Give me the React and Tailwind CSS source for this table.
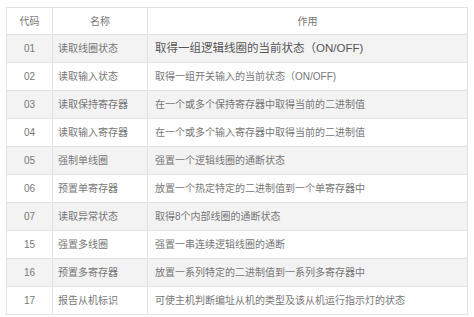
const rows = [
  ["01", "读取线圈状态", "取得一组逻辑线圈的当前状态（ON/OFF)", true],
  ["02", "读取输入状态", "取得一组开关输入的当前状态（ON/OFF)"],
  ["03", "读取保持寄存器", "在一个或多个保持寄存器中取得当前的二进制值"],
  ["04", "读取输入寄存器", "在一个或多个输入寄存器中取得当前的二进制值"],
  ["05", "强制单线圈", "强置一个逻辑线圈的通断状态"],
  ["06", "预置单寄存器", "放置一个热定特定的二进制值到一个单寄存器中"],
  ["07", "读取异常状态", "取得8个内部线圈的通断状态"],
  ["15", "强置多线圈", "强置一串连续逻辑线圈的通断"],
  ["16", "预置多寄存器", "放置一系列特定的二进制值到一系列多寄存器中"],
  ["17", "报告从机标识", "可使主机判断编址从机的类型及该从机运行指示灯的状态"],
]

export default function App() {
  return (
    <div className="w-[474px] h-[317px] bg-white pt-[7px] pl-[6px] font-['Liberation_Sans','Noto_Sans_CJK_SC',sans-serif] text-[#777]">
      <table className="w-[461px] table-fixed border-collapse text-[10px]">
        <colgroup>
          <col className="w-[46px]" />
          <col className="w-[95px]" />
          <col className="w-[320px]" />
        </colgroup>
        <thead>
          <tr className="h-[27px]">
            <th className="border border-[#e2e2e2] font-normal text-center">代码</th>
            <th className="border border-[#e2e2e2] font-normal text-center">名称</th>
            <th className="border border-[#e2e2e2] font-normal text-center">作用</th>
          </tr>
        </thead>
        <tbody>
          {rows.map(([code, name, desc, big], i) => (
            <tr key={code} className={`h-[28px] ${i % 2 === 0 ? "bg-[#f3f3f3]" : "bg-white"}`}>
              <td className="border border-[#e2e2e2] text-center">{code}</td>
              <td className="border border-[#e2e2e2] pl-[5px]">{name}</td>
              <td className={`border border-[#e2e2e2] pl-[7px] ${big ? "text-[11.5px] text-[#555]" : ""}`}>{desc}</td>
            </tr>
          ))}
        </tbody>
      </table>
    </div>
  )
}
